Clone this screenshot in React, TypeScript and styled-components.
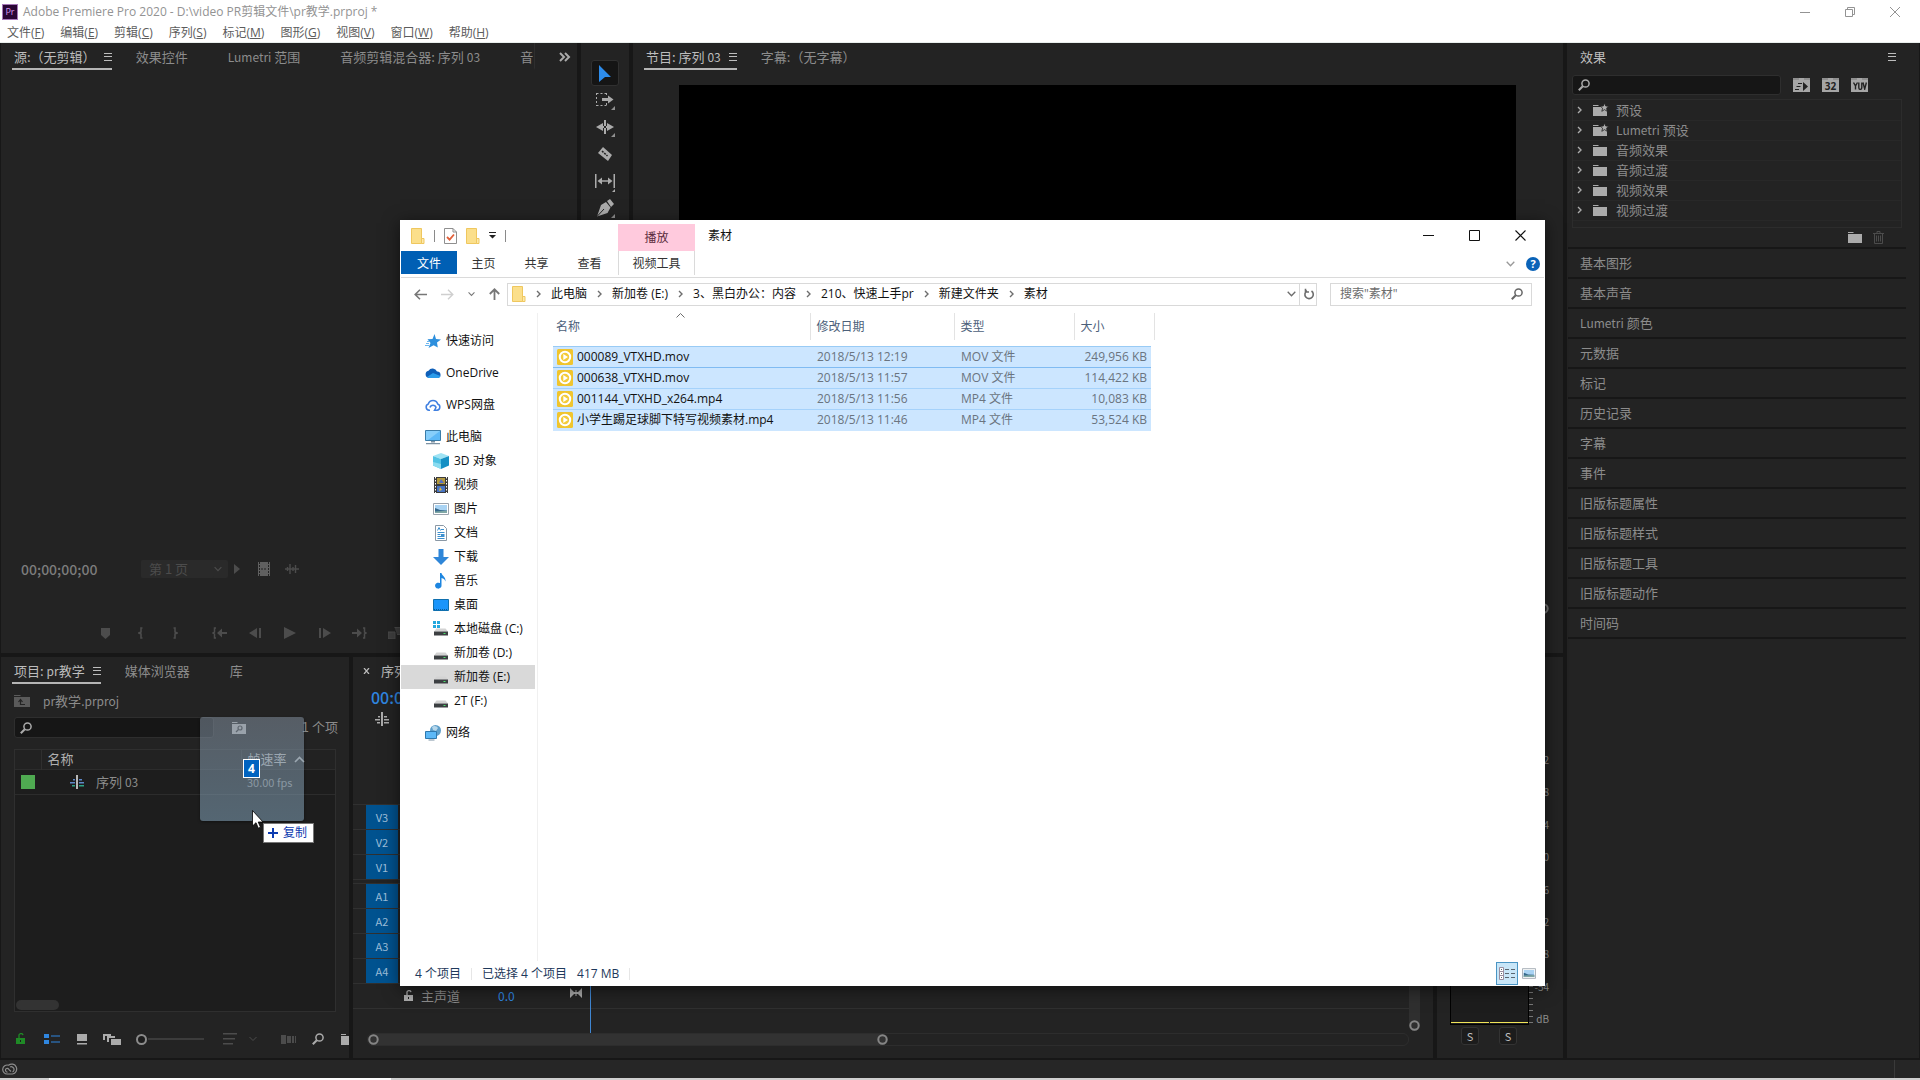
import React from 'react';
import styled, { createGlobalStyle, css } from 'styled-components';

const uiFont = '"Open Sans", "Noto Sans CJK SC", sans-serif';
const panelFont = '"Noto Sans CJK SC", "Open Sans", sans-serif';

const c = {
  gap: '#171717',
  panel: '#232323',
  well: '#1d1d1d',
  field: '#161616',
  line: '#303030',
  text: '#8c8c8c',
  bright: '#bdbdbd',
  icon: '#ababab',
  dim: '#4c4c4c',
  blue: '#2f86e0',
  track: '#00528f',
};

const GlobalStyle = createGlobalStyle`
  *, *::before, *::after { box-sizing: border-box; }
  html, body, #root { height: 100%; }
  body { margin: 0; overflow: hidden; background: ${c.gap}; font: 12px/16px ${uiFont}; }
  button, input, select { font: inherit; color: inherit; }
  svg { display: block; flex: none; }
  table { border-collapse: collapse; border-spacing: 0; }
`;

const Button = styled.button`
  display: flex;
  align-items: center;
  justify-content: center;
  flex: none;
  padding: 0;
  border: 0;
  background: none;
  white-space: nowrap;
`;

const Latin = styled.span`
  font-size: 12px;
`;

/* Panel captions set their Latin runs one size below the Chinese text. */
function Caption({ text }: { text: string }) {
  return (
    <span>
      {text.split(/([A-Za-z0-9.]+)/).map((part, i) => (i % 2 ? <Latin key={i}>{part}</Latin> : part))}
    </span>
  );
}

/* ---------- icons ---------- */

type IcoProps = { w: number; h: number; children: React.ReactNode; stroke?: number };

function Ico({ w, h, children, stroke }: IcoProps) {
  return (
    <svg
      width={w}
      height={h}
      viewBox={`0 0 ${w} ${h}`}
      fill={stroke ? 'none' : 'currentColor'}
      stroke={stroke ? 'currentColor' : 'none'}
      strokeWidth={stroke}
      aria-hidden="true"
    >
      {children}
    </svg>
  );
}

const MenuLines = () => (
  <Ico w={8} h={8}><path d="M0 0h8v1H0zM0 3h8v1H0zM0 7h8v1H0z" /></Ico>
);
const Magnifier = ({ size = 12 }: { size?: number }) => (
  <svg width={size} height={size} viewBox="0 0 12 12" fill="none" stroke="currentColor" strokeWidth="1.5" aria-hidden="true">
    <circle cx="7.5" cy="4.5" r="3.6" />
    <path d="M4.8 7.2L.8 11.2" strokeWidth="2" />
  </svg>
);
const FolderGlyph = ({ star }: { star?: boolean }) => (
  <Ico w={16} h={14}>
    <path d="M0 2h5l1 1H0zM0 4h14v9H0z" />
    {star && <path d="M11.5 0l1.2 3 3 .2-2.3 2 .8 3.1-2.7-1.7-2.7 1.7.8-3.1-2.3-2 3-.2z" stroke="#232323" strokeWidth=".8" />}
  </Ico>
);
const Ring = () => (
  <Ico w={11} h={11} stroke={2}><circle cx="5.5" cy="5.5" r="4.2" /></Ico>
);
const Lock = () => (
  <Ico w={12} h={12}>
    <path d="M1 5h9v6H1z" />
    <path d="M4 5V3a2 2 0 0 1 4-.8" fill="none" stroke="currentColor" strokeWidth="1.3" />
    <path d="M5 7h1v2H5z" fill="#1d1d1d" />
  </Ico>
);
const SequenceGlyph = ({ color }: { color?: boolean }) => (
  <Ico w={14} h={14}>
    <path d="M6 0h2v14H6z" fill={color ? '#b8b8b8' : undefined} />
    <path d="M3 4h2v1.5H3zM9 4h3v1.5H9zM9 7h5v1.5H9z" fill={color ? '#5d87c8' : undefined} />
    <path d="M0 7h5v1.5H0z" fill={color ? '#5d87c8' : undefined} />
    <path d="M2 10h3v1.5H2zM9 10h5v1.5H9z" fill={color ? '#2fa386' : undefined} />
  </Ico>
);
const FolderYellow = () => (
  <Ico w={14} h={16}>
    <path d="M.5.5h10v15H.5z" fill="#fbdf8b" stroke="#efc75e" />
    <path d="M10.5 10.5h2.5v5h-2.5z" fill="#fde9ab" stroke="#efc75e" />
  </Ico>
);
const CheckPage = () => (
  <Ico w={13} h={16}>
    <path d="M.5.5h8.5l3.5 3.5v11.5H.5z" fill="#fff" stroke="#8f8f8f" />
    <path d="M9 .5V4h3.5" fill="none" stroke="#8f8f8f" />
    <path d="M3 9l2.6 2.6L10 6.5" fill="none" stroke="#e2603a" strokeWidth="1.8" />
  </Ico>
);
const Crumb = () => (
  <Ico w={5} h={8} stroke={1.4}><path d="M1 1l3 3-3 3" /></Ico>
);
const ChevronDown = ({ w = 9 }: { w?: number }) => (
  <svg width={w} height={6} viewBox="0 0 9 6" fill="none" stroke="currentColor" strokeWidth="1.3" aria-hidden="true"><path d="M.7.8l3.8 4 3.8-4" /></svg>
);
const PlayFile = () => (
  <Ico w={16} h={16}>
    <rect width="16" height="16" rx="1.5" fill="#f0c52e" />
    <circle cx="8" cy="8" r="5.2" fill="#f3cb3a" stroke="#fff" strokeWidth="2" />
    <path d="M6.3 5L11 8l-4.7 3z" fill="#fff" />
  </Ico>
);
const PictureGlyph = ({ w = 16, h = 12 }: { w?: number; h?: number }) => (
  <svg width={w} height={h} viewBox="0 0 16 12" aria-hidden="true">
    <path d="M.5.5h15v11H.5z" fill="#fff" stroke="#9aa3ad" />
    <path d="M2 2h12v8H2z" fill="#a9d3f3" />
    <path d="M2 5l5 2 7 .5V10H2z" fill="#35688c" />
    <path d="M2 8.4l12-.6V10H2z" fill="#7fa7a5" />
  </svg>
);
const Drive = ({ system }: { system?: boolean }) => (
  <Ico w={16} h={16}>
    {system && <path d="M0 0h3v3H0zM4 0h3v3H4zM0 4h3v3H0zM4 4h3v3H4z" fill="#23a7dd" />}
    <path d="M3.5 7.5h9l2.5 3H1z" fill="#d3d3d3" />
    <path d="M1 10.5h14v4H1z" fill="#3c3f42" />
    <path d="M10.5 12h2v1h-2z" fill="#4be36b" />
  </Ico>
);

const navGlyphs: Record<string, React.ReactNode> = {
  star: <Ico w={16} h={16}><path d="M9.500 1l1.500 5 5 .4-4 3.100.8 5-4.200-2.300L3.500 15l2-5L2.500 6.300 7.500 6z" fill="#2d8fdd" /><path d="M0 12.500h4M1 10.500h3M2 8.500h2" stroke="#6db6ee" /></Ico>,
  cloud: <Ico w={16} h={16}><path d="M4 13a3.700 3.700 0 0 1-.5-7.300A4.800 4.800 0 0 1 12 6.500 3.300 3.300 0 0 1 13 13z" fill="#0f5fb8" /><path d="M2 12l6-4 7.500 3c-.5 1.300-1.500 2-2.500 2H4z" fill="#2b9bea" /></Ico>,
  wps: <Ico w={16} h={16} stroke={1.5}><path d="M5 13.200H4A3.200 3.200 0 0 1 3.300 7 4.900 4.900 0 0 1 12.700 7a3.200 3.200 0 0 1-.7 6.200H9.500L11 10.500a3.100 3.100 0 0 0-6 0" stroke="#3f7fe0" /></Ico>,
  pc: <Ico w={16} h={16}><path d="M.5 1.500h15v10H.5z" fill="#5cb8f7" stroke="#3a7ca8" /><path d="M1 2h14L3 11H1z" fill="#86cefb" /><path d="M6 12h4v1.500H6zM1 14h14v1.200H1z" fill="#7d92a3" /></Ico>,
  cube: <Ico w={16} h={16}><path d="M8 0l8 3-8 3-8-3z" fill="#9fe3f4" /><path d="M0 3l8 3v10l-8-3.500z" fill="#52c3e4" /><path d="M16 3L8 6v10l8-3.500z" fill="#1590c4" /><path d="M0 9l8 2v5l-8-3.500z" fill="#8bdcf0" /></Ico>,
  film: <Ico w={16} h={16}><path d="M1 0h14v16H1z" fill="#3b3b3b" /><path d="M4 1h8v6H4z" fill="#b49a3c" /><path d="M4 9h8v6H4z" fill="#4774c4" /><path d="M8 2l3 4H6z" fill="#5570c8" /><path d="M7 10l2 3-3 1z" fill="#e0b63c" /><path d="M2.500 0v16M13.500 0v16" stroke="#fff" strokeDasharray="1.500 1.500" /></Ico>,
  picture: <PictureGlyph />,
  doc: <Ico w={16} h={16}><path d="M2.500.5h8l3 3v12h-11z" fill="#fff" stroke="#8a98a5" /><path d="M4.500 5.500l1.500-3 1.500 3M8 4.500h3M4.500 7.500h7M4.500 9.500h3M4.500 11.500h7M4.500 13.500h7" fill="none" stroke="#3b8fcf" /><path d="M8 9h3.500v2H8z" fill="#3b8fcf" /></Ico>,
  down: <Ico w={16} h={16}><path d="M5.500 0h5v8H16l-8 8-8-8h5.500z" fill="#2f86d8" /></Ico>,
  note: <Ico w={16} h={16}><path d="M7 0h1.500c.4 3 4.500 3.500 4 8.500-.6-2-2-3.200-4-3.500v7.500a3.200 3 0 1 1-1.500-2.400z" fill="#1d86e0" /></Ico>,
  desktop: <Ico w={16} h={16}><path d="M.5 2.500h15v11H.5z" fill="#1a95fb" stroke="#0f6fae" /><path d="M1 12.500h14" stroke="#0b5d9a" strokeDasharray="1 1" /></Ico>,
  sysdrive: <Drive system />,
  drive: <Drive />,
  net: <Ico w={16} h={16}><circle cx="10.500" cy="5.500" r="5.500" fill="#5f9fca" /><path d="M7 2c2-2 5-1 6 1l-2 3-3-1z" fill="#b5d6ea" /><path d="M.5 6.500h11v7H.5z" fill="#5cb8f7" stroke="#2e78ae" /><path d="M3.500 15h6" stroke="#7d92a3" /></Ico>,
};

/* ---------- application frame ---------- */

const Page = styled.div`
  position: relative;
  display: flex;
  flex-direction: column;
  min-height: 100vh;
`;

const TitleBar = styled.header`
  display: flex;
  align-items: center;
  height: 22px;
  padding: 1px 20px 0 2px;
  gap: 5px;
  background: #fff;
  color: #939393;
`;

const AppBadge = styled.span`
  width: 16px;
  height: 16px;
  border: 1px solid #a678b8;
  background: #2a0634;
  color: #d79bf0;
  font-size: 9px;
  line-height: 14px;
  text-align: center;
`;

const AppTitle = styled.h1`
  flex: 1;
  margin: 0;
  font: inherit;
`;

const WindowButtons = styled.div<{ $gap: number }>`
  display: flex;
  gap: ${p => p.$gap}px;
`;

const MenuBar = styled.nav`
  display: flex;
  gap: 16px;
  height: 21px;
  padding: 2px 7px 0;
  border-bottom: 1px solid #e8eeec;
  background: #fff;
  color: #5c5c5c;
`;

const Workspace = styled.main`
  flex: 1;
  display: grid;
  grid-template-columns: minmax(0, 1fr) 352px;
  gap: 4px;
  padding: 0 1px 2px;
`;

const LeftSide = styled.div`
  display: grid;
  grid-template-rows: minmax(0, 610fr) minmax(0, 401fr);
  gap: 4px;
  min-width: 0;
`;

const UpperRow = styled.div`
  display: grid;
  grid-template-columns: 576fr 48px 930fr;
  gap: 4px;
  min-height: 0;
`;

const LowerRow = styled.div`
  display: grid;
  grid-template-columns: 348px minmax(0, 1fr) 126px;
  gap: 4px;
  min-height: 0;
`;

const Panel = styled.section`
  position: relative;
  display: flex;
  flex-direction: column;
  min-width: 0;
  min-height: 0;
  overflow: hidden;
  background: ${c.panel};
  color: ${c.text};
  font: 13px/18px ${panelFont};
`;

const TabBar = styled.div`
  display: flex;
  flex: none;
  gap: 24px;
  height: 27px;
  padding: 0 10px 0 11px;
`;

const Tab = styled(Button)<{ $active?: boolean }>`
  gap: 8px;
  padding: 2px ${p => (p.$active ? 0 : 16)}px 0 ${p => (p.$active ? 2 : 0)}px;
  border-bottom: 2px solid ${p => (p.$active ? '#b5b5b5' : 'transparent')};
  color: ${p => (p.$active ? c.bright : c.text)};
`;

const TabOverflow = styled(Button)`
  margin-left: auto;
  padding-right: 4px;
  color: ${c.icon};
`;

const ClippedTab = styled(Tab)`
  padding-right: 1px;
  border-right: 1px solid #2e2e2e;
`;

const Fill = styled.div`
  flex: 1;
`;

/* ---------- source monitor ---------- */

const SourceInfo = styled.div`
  display: flex;
  align-items: center;
  height: 18px;
  padding-left: 20px;
  color: ${c.dim};
`;

const Timecode = styled.span<{ $hot?: boolean }>`
  font: 500 ${p => (p.$hot ? 16 : 14)}px/18px "Noto Sans CJK SC", sans-serif;
  color: ${p => (p.$hot ? c.blue : '#7c7c7c')};
`;

const PageSelect = styled.select`
  appearance: none;
  width: 73px;
  height: 18px;
  padding: 0 8px;
  border: 0;
  border-radius: 2px;
  background: #2a2a2a;
  color: ${c.dim};
`;

const PageField = styled.label`
  display: flex;
  align-items: center;
  margin: 0 6px 0 auto;
  width: 87px;
  border-radius: 2px;
  background: #2a2a2a;
`;

const InfoLeft = styled.div`
  display: flex;
  width: 213px;
`;

const InfoIcons = styled.div`
  display: flex;
  align-items: center;
  gap: 15px;
`;

const Transport = styled.div`
  display: flex;
  height: 20px;
  margin: 45px 0 10px;
  padding-left: 87px;
  color: ${c.dim};
`;

const TransportGroup = styled.div`
  display: flex;
  & + & { margin-left: 9px; }
`;

const TransportButton = styled(Button)`
  width: 35px;
`;

/* ---------- tools ---------- */

const ToolList = styled.div`
  display: flex;
  flex-direction: column;
  align-items: center;
  padding-top: 17px;
  color: ${c.icon};
`;

const Tool = styled(Button)<{ $active?: boolean }>`
  width: 28px;
  height: 27px;
  ${p => p.$active && css`
    height: 26px;
    border: 1px solid #303030;
    border-radius: 3px;
    background: #151515;
    color: #2d8ceb;
  `}
`;

/* ---------- program monitor ---------- */

const Screen = styled.div`
  margin: 15px 47px 0 46px;
  aspect-ratio: 16 / 9;
  background: #000;
`;

const ZoomRow = styled.div`
  display: flex;
  justify-content: flex-end;
  margin-top: 47px;
  padding-right: 14px;
  color: #777;
`;

/* ---------- effects ---------- */

const EffectsHead = styled.div`
  display: flex;
  align-items: center;
  justify-content: space-between;
  height: 32px;
  padding: 0 23px 4px 13px;
  color: ${c.bright};
`;

const SearchBox = styled.label<{ $w: number; $h: number }>`
  display: flex;
  align-items: center;
  width: ${p => p.$w}px;
  height: ${p => p.$h}px;
  padding-left: 5px;
  border: 1px solid #2e2e2e;
  border-radius: 3px;
  background: ${c.field};
  color: ${c.icon};
`;

const SearchInput = styled.input`
  flex: 1;
  min-width: 0;
  border: 0;
  outline: 0;
  background: none;
`;

const EffectsSearch = styled.div`
  display: flex;
  align-items: center;
  gap: 12px;
  padding-left: 5px;
  color: ${c.icon};
`;

const FxBadge = styled(Button)`
  width: 17px;
  height: 14px;
  border-top: 2px dashed #8f8f8f;
  background: #a6a6a6;
  color: #232323;
  font: 700 10px/12px "Open Sans", sans-serif;
`;

const EffectsTree = styled.ul`
  margin: 4px 17px 0 5px;
  padding: 1px 0 6px;
  border: 1px solid #2c2c2c;
  list-style: none;
`;

const EffectsItem = styled.li`
  display: flex;
  align-items: center;
  gap: 7px;
  height: 20px;
  padding: 0 0 2px 4px;
  border-bottom: 1px solid #282828;
  svg { color: ${c.icon}; }
  svg:first-child { margin-right: 4px; }
`;

const EffectsFoot = styled.div`
  display: flex;
  align-items: center;
  justify-content: flex-end;
  gap: 9px;
  height: 19px;
  padding: 0 35px 1px 0;
  color: ${c.icon};
`;

const Sections = styled.div`
  margin: 0 13px 0 1px;
`;

const SectionRow = styled(Button)`
  justify-content: flex-start;
  width: 100%;
  height: 30px;
  padding: 0 0 1px 12px;
  border-top: 2px solid ${c.gap};
  &:last-child { height: 32px; border-bottom: 2px solid ${c.gap}; }
`;

/* ---------- project ---------- */

const ProjectPath = styled.div`
  display: flex;
  align-items: center;
  gap: 13px;
  height: 33px;
  padding: 1px 0 0 13px;
`;

const ProjectSearch = styled.div`
  display: flex;
  align-items: center;
  height: 21px;
  padding-left: 13px;
  color: ${c.text};
`;

const ItemCount = styled.span`
  margin-left: auto;
  padding: 0 11px 2px 0;
`;

const BinSearch = styled(Button)`
  margin-left: 18px;
  color: ${c.icon};
`;

const ProjectList = styled.div`
  flex: 1;
  display: flex;
  flex-direction: column;
  justify-content: space-between;
  margin: 11px 13px 0 13px;
  border: 1px solid #2f2f2f;
  background: ${c.well};
`;

const ProjectTable = styled.table`
  width: 100%;
  table-layout: fixed;
  th { height: 19px; padding: 0 0 1px 6px; background: #222; font-weight: 400; color: #b0b0b0; text-align: left; line-height: 18px; }
  th + th { border-left: 1px solid #2f2f2f; }
  td { height: 25px; padding: 0 0 1px 6px; border: solid #2c2c2c; border-width: 1px 0; }
`;

const ThCell = styled.div`
  display: flex;
  align-items: center;
  gap: 7px;
`;

const Label = styled.i`
  display: block;
  width: 14px;
  height: 14px;
  background: #4faa51;
`;

const ItemName = styled.div`
  display: flex;
  align-items: center;
  gap: 12px;
  padding-left: 23px;
`;

const Rate = styled.span`
  font-size: 11px;
`;

const Thumb = styled.div`
  width: 43px;
  height: 10px;
  margin: 1px;
  border-radius: 5px;
  background: #333;
`;

const ProjectTools = styled.div`
  display: flex;
  align-items: center;
  gap: 15px;
  height: 46px;
  padding: 8px 0 0 14px;
  color: ${c.icon};
`;

const ToolButton = styled(Button)<{ $color?: string }>`
  color: ${p => p.$color ?? c.icon};
`;

const SizeRange = styled.input`
  appearance: none;
  flex: none;
  width: 72px;
  height: 12px;
  margin: 0;
  background: linear-gradient(#3c3c3c, #3c3c3c) 12px 5px / 56px 2px no-repeat;
  &::-webkit-slider-thumb {
    appearance: none;
    width: 11px;
    height: 11px;
    border: 2px solid #8c8c8c;
    border-radius: 50%;
    background: #1d1d1d;
  }
`;

/* ---------- timeline ---------- */

const SequenceTab = styled(TabBar)`
  align-items: center;
  gap: 11px;
  padding-left: 10px;
  color: ${c.bright};
`;

const TimelineHead = styled.div`
  display: flex;
  flex-direction: column;
  align-items: flex-start;
  gap: 6px;
  height: 120px;
  padding: 4px 0 0 18px;
  color: ${c.icon};
  svg { margin-left: 4px; }
`;

const TimelineBody = styled.div`
  display: flex;
  padding-right: 13px;
`;

const Tracks = styled.div`
  flex: 1;
`;

const TrackGroup = styled.div`
  border-bottom: 1px solid ${c.line};
  & + & { margin-top: 3px; }
`;

const Track = styled.div`
  display: flex;
  height: 25px;
  padding-left: 13px;
  border-top: 1px solid ${c.line};
`;

const TrackTarget = styled(Button)`
  width: 32px;
  background: ${c.track};
  color: #9dbdd8;
  font-size: 11px;
`;

const MasterTrack = styled.div`
  display: flex;
  align-items: center;
  height: 25px;
  padding: 0 0 1px 50px;
  border-bottom: 1px solid ${c.line};
  color: ${c.icon};
`;

const MasterName = styled.span`
  width: 83px;
  padding-left: 6px;
  color: ${c.text};
`;

const MasterLevel = styled.span`
  width: 72px;
  color: ${c.blue};
  font-size: 12px;
`;

const VScroll = styled.div`
  display: flex;
  align-items: flex-end;
  width: 11px;
  margin-bottom: -22px;
  border-radius: 5px;
  background: #2f2f2f;
  color: #858585;
`;

const HScroll = styled.div`
  display: flex;
  margin: 24px 24px 0 14px;
  border: 1px solid #2d2d2d;
  border-radius: 6px;
  color: #858585;
`;

const HScrollRange = styled.div`
  display: flex;
  justify-content: space-between;
  width: 50%;
  border-radius: 6px;
  background: #323232;
`;

const Playhead = styled.i`
  position: absolute;
  left: 237px;
  top: 120px;
  bottom: 25px;
  width: 1px;
  background: #3f86d2;
`;

/* ---------- audio meter ---------- */

const MeterArea = styled.div`
  flex: 1;
  display: flex;
  margin-top: 90px;
  padding: 0 14px 0 13px;
`;

const MeterBox = styled.div`
  display: grid;
  grid-template-columns: 1fr 1fr;
  gap: 1px;
  align-items: end;
  width: 79px;
  padding-bottom: 1px;
  border: 1px solid #000;
  background: ${c.well};
`;

const MeterFloor = styled.i`
  height: 1px;
  background: #f0e458;
`;

const MeterTicks = styled.div`
  width: 4px;
  background: repeating-linear-gradient(to top, transparent 0 2px, #777 2px 3px, transparent 3px 6px);
`;

const MeterScale = styled.div`
  flex: 1;
  display: flex;
  flex-direction: column;
  justify-content: space-between;
  text-align: right;
  padding-top: 7px;
  font: 10px/12px "Noto Sans CJK SC", sans-serif;
`;

const SoloRow = styled.div`
  display: flex;
  gap: 20px;
  padding: 2px 0 13px 24px;
`;

const Solo = styled(Button)`
  width: 18px;
  height: 18px;
  padding-bottom: 1px;
  border: 1px solid #333;
  border-radius: 3px;
  background: #1c1c1c;
  color: ${c.bright};
  font-size: 11px;
`;

/* ---------- bottom strips ---------- */

const AppStatus = styled.footer`
  display: flex;
  align-items: center;
  height: 18px;
  padding-left: 2px;
  background: #262626;
  color: #8d8d8d;
`;

const StatusDivider = styled.i`
  width: 1px;
  height: 18px;
  margin: 0 25px 0 auto;
  background: #3a3a3a;
`;

const Taskbar = styled.div`
  display: flex;
  height: 2px;
  padding-left: 49px;
  background: #cfcfcf;
`;

const TaskbarField = styled.i`
  width: 342px;
  background: #fdfdfd;
`;

/* ---------- drag feedback ---------- */

const DragGhost = styled.div`
  position: absolute;
  left: 200px;
  top: 717px;
  width: 104px;
  height: 104px;
  border-radius: 3px;
  background: linear-gradient(rgba(137, 151, 167, .5), rgba(135, 169, 193, .52));
  box-shadow: 0 1px 3px rgba(0, 0, 0, .4);
`;

const DragCount = styled.span`
  position: absolute;
  left: 43px;
  top: 42px;
  width: 17px;
  height: 19px;
  border: 1px solid #fff;
  background: #0063c0;
  color: #fff;
  font-weight: 700;
  line-height: 17px;
  text-align: center;
`;

const Pointer = styled.div`
  position: absolute;
  left: 52px;
  top: 93px;
`;

const DropHint = styled.div`
  position: absolute;
  left: 63px;
  top: 106px;
  display: flex;
  align-items: center;
  gap: 5px;
  height: 20px;
  padding: 0 6px 0 4px;
  border: 1px solid #767676;
  background: #fff;
  color: #0d3bb0;
  white-space: nowrap;
`;

/* ---------- file explorer ---------- */

const Explorer = styled.section`
  position: absolute;
  left: 400px;
  top: 220px;
  right: 375px;
  bottom: 94px;
  display: flex;
  flex-direction: column;
  padding: 0 1px;
  background: #fff;
  color: #111;
  box-shadow: 0 3px 16px rgba(0, 0, 0, .55);
`;

const RibbonTop = styled.div`
  display: flex;
  height: 31px;
`;

const QuickAccess = styled.div`
  display: flex;
  align-items: center;
  gap: 9px;
  width: 217px;
  padding-left: 10px;
`;

const Bar = styled.i`
  width: 1px;
  height: 12px;
  background: #8a8a8a;
`;

const ContextTab = styled.div`
  width: 77px;
  margin-top: 4px;
  background: #ffcadd;
  color: #5a2a3c;
  line-height: 27px;
  text-align: center;
`;

const ExplorerTitle = styled.h2`
  flex: 1;
  margin: 0;
  padding-left: 13px;
  font: inherit;
  line-height: 32px;
`;

const ExplorerButtons = styled(WindowButtons)`
  padding-right: 18px;
`;

const RibbonTabs = styled.div`
  display: flex;
  height: 27px;
  border-bottom: 1px solid #dadada;
  color: #333;
`;

const RibbonTab = styled(Button)<{ $kind?: 'file' | 'context' }>`
  width: 53px;
  height: 24px;
  padding-top: 2px;
  ${p => p.$kind === 'file' && css`
    width: 56px;
    height: 23px;
    background: #005fb4;
    color: #fff;
  `}
  ${p => p.$kind === 'context' && css`
    width: 77px;
    margin-left: 2px;
    border: solid #dadada;
    border-width: 0 1px;
  `}
`;

const RibbonEnd = styled.div`
  display: flex;
  align-items: center;
  gap: 11px;
  margin-left: auto;
  padding-right: 4px;
  color: #999;
`;

const Help = styled(Button)`
  width: 14px;
  height: 14px;
  border-radius: 50%;
  background: #0a63b8;
  color: #fff;
  font-weight: 700;
  font-size: 11px;
`;

const AddressRow = styled.div`
  display: flex;
  align-items: center;
  gap: 13px;
  height: 32px;
  padding: 0 12px 0 13px;
  color: #777;
`;

const NavArrows = styled.div`
  display: flex;
  align-items: center;
  gap: 14px;
  width: 80px;
`;

const AddressBox = styled.div`
  flex: 1;
  display: flex;
  align-items: center;
  gap: 10px;
  height: 23px;
  padding: 0 1px 0 4px;
  border: 1px solid #d9d9d9;
  color: #6d6d6d;
`;

const CrumbLink = styled.a`
  color: #111;
  text-decoration: none;
  white-space: nowrap;
`;

const AddressTools = styled.div`
  display: flex;
  align-items: center;
  align-self: stretch;
  gap: 3px;
  margin-left: auto;
`;

const AddressSplit = styled.i`
  align-self: stretch;
  width: 1px;
  background: #d9d9d9;
`;

const FileSearch = styled.label`
  display: flex;
  align-items: center;
  width: 202px;
  height: 23px;
  padding: 0 8px 0 9px;
  border: 1px solid #d9d9d9;
  color: #666;
`;

const FileSearchInput = styled(SearchInput)`
  padding: 0;
  &::placeholder { color: #6d6d6d; }
`;

const ExplorerBody = styled.div`
  flex: 1;
  display: flex;
  min-height: 0;
  padding-top: 3px;
`;

const NavPane = styled.nav`
  width: 137px;
  padding: 16px 2px 0 0;
  border-right: 1px solid #f0f0f0;
`;

const NavItem = styled.a<{ $child?: boolean; $selected?: boolean; $spaced?: boolean }>`
  display: flex;
  align-items: center;
  gap: 5px;
  height: 24px;
  margin-bottom: ${p => (p.$spaced ? 8 : 0)}px;
  padding-left: ${p => (p.$child ? 32 : 24)}px;
  background: ${p => (p.$selected ? '#d9d9d9' : 'none')};
  color: #111;
  text-decoration: none;
  white-space: nowrap;
`;

const FileArea = styled.div`
  flex: 1;
  padding-left: 15px;
`;

const FileTable = styled.table`
  table-layout: fixed;
  width: 602px;
  th {
    height: 27px;
    padding: 0 0 0 6px;
    border-right: 1px solid #e3e3e3;
    color: #4c607a;
    font-weight: 400;
    text-align: left;
  }
  th:first-child { padding-left: 3px; }
`;

const FileRows = styled(FileTable)`
  width: 598px;
  margin-top: 6px;
  td {
    height: 21px;
    padding: 0 4px 0 6px;
    border-bottom: 1px solid #a5d2fb;
    background: #cce6ff;
    color: #6a7480;
    line-height: 16px;
    white-space: nowrap;
  }
  td:first-child { padding-left: 4px; color: #111; }
  td:last-child { text-align: right; }
  tr:first-child td { border-top: 1px solid #99cbf5; border-bottom-color: #80bbf2; }
  tr:last-child td { border-bottom: 0; }
`;

const FileName = styled.div`
  display: flex;
  align-items: center;
  gap: 4px;
`;

const HeadName = styled.div`
  position: relative;
`;

const SortMark = styled.span`
  position: absolute;
  left: 120px;
  top: -6px;
  color: #6d6d6d;
`;

const ExplorerStatus = styled.footer`
  display: flex;
  align-items: center;
  height: 25px;
  padding: 0 8px 0 14px;
  gap: 10px;
  color: #1e395b;
`;

const StatusSplit = styled.i`
  width: 1px;
  height: 12px;
  background: #e6e6e6;
`;

const ViewButtons = styled.div`
  display: flex;
  align-items: center;
  gap: 4px;
  margin-left: auto;
`;

const ViewButton = styled(Button)<{ $on?: boolean }>`
  height: 23px;
  ${p => p.$on && css`
    width: 22px;
    border: 1px solid #4a95c4;
    background: #c8e6f8;
  `}
`;

/* ---------- data ---------- */

const menus: [string, string][] = [
  ['文件', 'F'], ['编辑', 'E'], ['剪辑', 'C'], ['序列', 'S'], ['标记', 'M'],
  ['图形', 'G'], ['视图', 'V'], ['窗口', 'W'], ['帮助', 'H'],
];

const effects = ['预设', 'Lumetri 预设', '音频效果', '音频过渡', '视频效果', '视频过渡'];

const sections = [
  '基本图形', '基本声音', 'Lumetri 颜色', '元数据', '标记', '历史记录', '字幕', '事件',
  '旧版标题属性', '旧版标题样式', '旧版标题工具', '旧版标题动作', '时间码',
];

const crumbs = ['此电脑', '新加卷 (E:)', '3、黑白办公：内容', '210、快速上手pr', '新建文件夹', '素材'];

const nav: { icon: string; text: string; child?: boolean; spaced?: boolean; selected?: boolean }[] = [
  { icon: 'star', text: '快速访问', spaced: true },
  { icon: 'cloud', text: 'OneDrive', spaced: true },
  { icon: 'wps', text: 'WPS网盘', spaced: true },
  { icon: 'pc', text: '此电脑' },
  { icon: 'cube', text: '3D 对象', child: true },
  { icon: 'film', text: '视频', child: true },
  { icon: 'picture', text: '图片', child: true },
  { icon: 'doc', text: '文档', child: true },
  { icon: 'down', text: '下载', child: true },
  { icon: 'note', text: '音乐', child: true },
  { icon: 'desktop', text: '桌面', child: true },
  { icon: 'sysdrive', text: '本地磁盘 (C:)', child: true },
  { icon: 'drive', text: '新加卷 (D:)', child: true },
  { icon: 'drive', text: '新加卷 (E:)', child: true, selected: true },
  { icon: 'drive', text: '2T (F:)', child: true, spaced: true },
  { icon: 'net', text: '网络' },
];

const files = [
  ['000089_VTXHD.mov', '2018/5/13 12:19', 'MOV 文件', '249,956 KB'],
  ['000638_VTXHD.mov', '2018/5/13 11:57', 'MOV 文件', '114,422 KB'],
  ['001144_VTXHD_x264.mp4', '2018/5/13 11:56', 'MP4 文件', '10,083 KB'],
  ['小学生踢足球脚下特写视频素材.mp4', '2018/5/13 11:46', 'MP4 文件', '53,524 KB'],
];

const corner = <path d="M21 17v4h-4z" opacity=".8" />;

const tools: [string, React.ReactNode][] = [
  ['向前选择轨道', <Ico w={22} h={22}><path d="M2.500 4.500h10M2.500 16.500h10M2.500 4v13M12.500 4v3M12.500 14v3" fill="none" stroke="currentColor" strokeDasharray="2 2" /><path d="M8 9h6V6.500l5.500 4-5.500 4V12H8z" />{corner}</Ico>],
  ['波纹编辑', <Ico w={22} h={22}><path d="M10 4h2v14h-2zM9 10V7l-7 4 7 4v-3h4v3l7-4-7-4v3z" />{corner}</Ico>],
  ['剃刀', <Ico w={22} h={22}><path d="M9 4l9 8-4 6-10-8z" /><path d="M8 8l5.500 5" stroke="#232323" strokeWidth="1.500" strokeDasharray="2 1" /></Ico>],
  ['外滑', <Ico w={22} h={22}><path d="M1 4h1.500v14H1zM19.500 4H21v14h-1.500zM8 7.500v2.700h6V7.500l4.500 3.500-4.500 3.500v-2.700H8v2.700L3.500 11z" /><path d="M21 19v3h-3z" /></Ico>],
  ['钢笔', <Ico w={22} h={22}><path d="M13 4l3-2 4 5-3 3zM12 5l4.500 5.500-3 5.500L3 19.500 7 8z" /><path d="M3 19.500l7-7.500" stroke="#232323" />{corner}</Ico>],
];

function SourceMonitor() {
  return (
    <Panel>
      <TabBar>
        <Tab $active>源:（无剪辑）<MenuLines /></Tab>
        <Tab>效果控件</Tab>
        <Tab><Caption text="Lumetri 范围" /></Tab>
        <Tab><Caption text="音频剪辑混合器: 序列 03" /></Tab>
        <ClippedTab>音</ClippedTab>
        <TabOverflow aria-label="更多面板">
          <Ico w={12} h={10} stroke={2}><path d="M1 1l4 4-4 4M6 1l4 4-4 4" /></Ico>
        </TabOverflow>
      </TabBar>
      <Fill />
      <SourceInfo>
        <InfoLeft>
          <Timecode>00;00;00;00</Timecode>
          <PageField>
            <PageSelect aria-label="页"><option>第 1 页</option></PageSelect>
            <ChevronDown w={8} />
          </PageField>
        </InfoLeft>
        <InfoIcons>
          <Ico w={9} h={10}><path d="M0 0l6 5-6 5z" /></Ico>
          <Ico w={12} h={14}><path d="M0 0h12v14H0z" fill="#606060" /><path d="M1.500 0v14M10.500 0v14M3 7h6" stroke="#232323" strokeDasharray="2 1" /></Ico>
          <Ico w={14} h={10} stroke={1.4}><path d="M0 5h14M2.500 3v4M5 0v10M8 3v4M10.500 1v8" /></Ico>
        </InfoIcons>
      </SourceInfo>
      <Transport>
        <TransportGroup>
          <TransportButton aria-label="添加标记"><Ico w={9} h={11}><path d="M0 0h9v7l-4.500 4L0 7z" /></Ico></TransportButton>
          <TransportButton aria-label="标记入点"><Ico w={5} h={12} stroke={1.6}><path d="M4.500 1H3v4L1 6l2 1v4h1.500" /></Ico></TransportButton>
          <TransportButton aria-label="标记出点"><Ico w={5} h={12} stroke={1.6}><path d="M.5 1H2v4l2 1-2 1v4H.5" /></Ico></TransportButton>
        </TransportGroup>
        <TransportGroup>
          <TransportButton aria-label="转到入点"><Ico w={15} h={12}><path d="M4 1H2.500v4L1 6l1.500 1v4H4" fill="none" stroke="currentColor" strokeWidth="1.500" /><path d="M5 6l5-4.500V5h5v2h-5v3.500z" /></Ico></TransportButton>
          <TransportButton aria-label="后退一帧"><Ico w={12} h={10}><path d="M8 0v10L0 5zM10 0h2v10h-2z" /></Ico></TransportButton>
          <TransportButton aria-label="播放"><Ico w={12} h={12}><path d="M0 0l12 6-12 6z" /></Ico></TransportButton>
          <TransportButton aria-label="前进一帧"><Ico w={12} h={10}><path d="M4 0v10l8-5zM0 0h2v10H0z" /></Ico></TransportButton>
          <TransportButton aria-label="转到出点"><Ico w={15} h={12}><path d="M11 1h1.500v4L14 6l-1.500 1v4H11" fill="none" stroke="currentColor" strokeWidth="1.500" /><path d="M10 6L5 1.500V5H0v2h5v3.500z" /></Ico></TransportButton>
          <TransportButton aria-label="插入"><Ico w={14} h={12}><path d="M0 5h7v7H0zM6.500.5h7v7H9" stroke="currentColor" fillOpacity=".7" /></Ico></TransportButton>
        </TransportGroup>
      </Transport>
    </Panel>
  );
}

function ToolPanel() {
  return (
    <Panel>
      <ToolList>
        <Tool $active aria-label="选择"><Ico w={12} h={17}><path d="M0 0l12 12H6l-6 5z" /></Ico></Tool>
        {tools.map(([name, icon]) => <Tool key={name} aria-label={name}>{icon}</Tool>)}
      </ToolList>
    </Panel>
  );
}

function EffectsPanel() {
  return (
    <Panel>
      <EffectsHead>效果<MenuLines /></EffectsHead>
      <EffectsSearch>
        <SearchBox $w={209} $h={20}><Magnifier /><SearchInput aria-label="搜索效果" /></SearchBox>
        <FxBadge aria-label="加速效果"><Ico w={13} h={9}><path d="M8 0l5 4.500-5 4.500zM3 1h4v1H3zM1.500 4h4v1h-4zM0 7h4v1H0z" /></Ico></FxBadge>
        <FxBadge>32</FxBadge>
        <FxBadge aria-label="YUV"><Ico w={14} h={8} stroke={1.4}><path d="M.5.5l2 3.500v3.500M4.500.5l-2 3.500M5.800.5v5c0 2.500 3 2.500 3 0v-5M10 .5l1.700 6.500L13.400.5" /></Ico></FxBadge>
      </EffectsSearch>
      <EffectsTree>
        {effects.map((name, i) => (
          <EffectsItem key={name}><Crumb /><FolderGlyph star={i < 2} /><Caption text={name} /></EffectsItem>
        ))}
      </EffectsTree>
      <EffectsFoot>
        <Button aria-label="新建自定义素材箱"><FolderGlyph /></Button>
        <ToolButton $color={c.dim} aria-label="删除"><Ico w={11} h={13} stroke={1}><path d="M0 2.500h11M4 2V.5h3V2M1.500 3v9.500h8V3M3.500 4.500v6M5.500 4.500v6M7.500 4.500v6" /></Ico></ToolButton>
      </EffectsFoot>
      <Sections>
        {sections.map(name => <SectionRow key={name}><Caption text={name} /></SectionRow>)}
      </Sections>
    </Panel>
  );
}

function ProjectPanel() {
  return (
    <Panel>
      <TabBar>
        <Tab $active><Caption text="项目: pr教学" /><MenuLines /></Tab>
        <Tab>媒体浏览器</Tab>
        <Tab>库</Tab>
      </TabBar>
      <ProjectPath>
        <ToolButton $color="#5a5a5a" aria-label="上一级"><Ico w={16} h={12}><path d="M0 0h6l1 1H0zM0 2h16v10H0z" /><path d="M4.500 7l2-2.500 2 2.500M6.500 5v4.500H11" fill="none" stroke="#232323" strokeWidth="1.200" /></Ico></ToolButton>
        <Caption text="pr教学.prproj" />
      </ProjectPath>
      <ProjectSearch>
        <SearchBox $w={200} $h={21}><Magnifier /><SearchInput aria-label="搜索项目" /></SearchBox>
        <BinSearch aria-label="素材箱查询"><Ico w={14} h={12}><path d="M0 0h5l1 1H0zM0 2h14v10H0z" /><circle cx="8" cy="6" r="2" fill="none" stroke="#333" strokeWidth="1.200" /><path d="M6.500 7.500L4 10" stroke="#333" strokeWidth="1.200" /></Ico></BinSearch>
        <ItemCount>1 个项</ItemCount>
      </ProjectSearch>
      <ProjectList>
        <ProjectTable>
          <colgroup><col style={{ width: 26 }} /><col style={{ width: 200 }} /><col /></colgroup>
          <thead>
            <tr><th aria-label="标签" /><th>名称</th><th><ThCell>帧速率<Ico w={11} h={7} stroke={1.6}><path d="M1 6l4.500-4.500L10 6" /></Ico></ThCell></th></tr>
          </thead>
          <tbody>
            <tr>
              <td><Label /></td>
              <td><ItemName><SequenceGlyph color /><Caption text="序列 03" /></ItemName></td>
              <td><Rate>30.00 fps</Rate></td>
            </tr>
          </tbody>
        </ProjectTable>
        <Thumb />
      </ProjectList>
      <ProjectTools>
        <ToolButton $color="#1f8a26" aria-label="可写"><Lock /></ToolButton>
        <ToolButton $color={c.blue} aria-label="列表视图"><Ico w={19} h={12}><path d="M2 1h5v4H2zM2 7h5v4H2zM9 2.500h9v1H9zM9 8.500h9v1H9z" /></Ico></ToolButton>
        <ToolButton aria-label="图标视图"><Ico w={11} h={11}><path d="M1 0h10v7H1zM1 9h10v1.500H1z" /></Ico></ToolButton>
        <ToolButton aria-label="自由变换视图"><Ico w={19} h={11}><path d="M1 0h8v2H3v4H1zM5 2h8v2H7v4H5zM9 5h10v6H9z" /></Ico></ToolButton>
        <SizeRange type="range" aria-label="缩略图大小" min={0} max={100} defaultValue={0} />
        <ToolButton $color={c.dim} aria-label="排序图标"><Ico w={34} h={12}><path d="M0 0h14v1.500H0zM0 5h12v1.500H0zM0 10h10v1.500H0z" /><path d="M26.500 4l3.500 3.500L33.500 4" fill="none" stroke="currentColor" /></Ico></ToolButton>
        <ToolButton $color={c.dim} aria-label="自动匹配序列"><Ico w={25} h={9}><path d="M9 0h5v9H9zM15 1h4v7h-4zM20 1h2v7h-2zM23 1h1v7h-1z" /></Ico></ToolButton>
        <ToolButton aria-label="查找"><Magnifier /></ToolButton>
        <ToolButton aria-label="新建素材箱"><Ico w={17} h={11}><path d="M2 0h5v1H2zM2 2h15v9H2z" /></Ico></ToolButton>
      </ProjectTools>
    </Panel>
  );
}

function Timeline() {
  return (
    <Panel>
      <SequenceTab as="div">
        <Ico w={7} h={6} stroke={1.2}><path d="M1 0l5 6M6 0L1 6" /></Ico>
        <Caption text="序列 03" />
      </SequenceTab>
      <TimelineHead>
        <Timecode $hot>00:00:00:00</Timecode>
        <SequenceGlyph />
      </TimelineHead>
      <TimelineBody>
        <Tracks>
          <TrackGroup>{['V3', 'V2', 'V1'].map(t => <Track key={t}><TrackTarget>{t}</TrackTarget></Track>)}</TrackGroup>
          <TrackGroup>{['A1', 'A2', 'A3', 'A4'].map(t => <Track key={t}><TrackTarget>{t}</TrackTarget></Track>)}</TrackGroup>
          <MasterTrack>
            <Lock />
            <MasterName>主声道</MasterName>
            <MasterLevel>0.0</MasterLevel>
            <Ico w={12} h={16}><path d="M0 0l5 5-5 5zM12 0v10L7 5zM5.500 2h1v6h-1zM3 4h6v2H3z" /></Ico>
          </MasterTrack>
        </Tracks>
        <VScroll><Ring /></VScroll>
      </TimelineBody>
      <HScroll><HScrollRange><Ring /><Ring /></HScrollRange></HScroll>
      <Playhead />
    </Panel>
  );
}

function AudioMeter() {
  return (
    <Panel>
      <MeterArea>
        <MeterBox><MeterFloor /><MeterFloor /></MeterBox>
        <MeterTicks />
        <MeterScale>
          {['-12', '-18', '-24', '-30', '-36', '-42', '-48', '-54', 'dB'].map(v => <span key={v}>{v}</span>)}
        </MeterScale>
      </MeterArea>
      <SoloRow><Solo>S</Solo><Solo>S</Solo></SoloRow>
    </Panel>
  );
}

function FileExplorer() {
  return (
    <Explorer>
      <RibbonTop>
        <QuickAccess>
          <FolderYellow /><Bar /><CheckPage /><FolderYellow />
          <Ico w={7} h={7}><path d="M0 0h7v1H0zM0 3h7L3.500 6.500z" fill="#222" /></Ico>
          <Bar />
        </QuickAccess>
        <ContextTab>播放</ContextTab>
        <ExplorerTitle>素材</ExplorerTitle>
        <ExplorerButtons $gap={35}>
          <Button aria-label="最小化"><Ico w={11} h={11}><path d="M0 5h11v1H0z" /></Ico></Button>
          <Button aria-label="最大化"><Ico w={11} h={11} stroke={1}><path d="M.5.5h10v10H.5z" /></Ico></Button>
          <Button aria-label="关闭"><Ico w={11} h={11} stroke={1.1}><path d="M.5.5l10 10M10.500.5l-10 10" /></Ico></Button>
        </ExplorerButtons>
      </RibbonTop>
      <RibbonTabs>
        <RibbonTab $kind="file">文件</RibbonTab>
        <RibbonTab>主页</RibbonTab>
        <RibbonTab>共享</RibbonTab>
        <RibbonTab>查看</RibbonTab>
        <RibbonTab $kind="context">视频工具</RibbonTab>
        <RibbonEnd><ChevronDown /><Help>?</Help></RibbonEnd>
      </RibbonTabs>
      <AddressRow>
        <NavArrows>
          <Ico w={13} h={11} stroke={1.6}><path d="M13 5.500H1M6 .8L1.200 5.500 6 10.200" /></Ico>
          <Ico w={13} h={11} stroke={1.4}><path d="M0 5.500h12M7 .8l4.800 4.700L7 10.200" stroke="#cfcfcf" /></Ico>
          <ChevronDown w={7} />
          <Ico w={11} h={12} stroke={1.8}><path d="M5.500 12V1.500M.8 6l4.700-4.700L10.200 6" /></Ico>
        </NavArrows>
        <AddressBox>
          <FolderYellow />
          {crumbs.map(name => (
            <React.Fragment key={name}><Crumb /><CrumbLink href="#">{name}</CrumbLink></React.Fragment>
          ))}
          <AddressTools>
            <ChevronDown />
            <AddressSplit />
            <Ico w={12} h={12} stroke={1.6}><path d="M4 2.800A4.200 4.200 0 1 0 8.500 3M2.500.8v3.200H6" /></Ico>
          </AddressTools>
        </AddressBox>
        <FileSearch><FileSearchInput aria-label="搜索" placeholder={'搜索"素材"'} /><Magnifier /></FileSearch>
      </AddressRow>
      <ExplorerBody>
        <NavPane>
          {nav.map(n => (
            <NavItem key={n.text} href="#" $child={n.child} $selected={n.selected} $spaced={n.spaced}>
              {navGlyphs[n.icon]}{n.text}
            </NavItem>
          ))}
        </NavPane>
        <FileArea>
          <FileTable>
            <colgroup><col style={{ width: 257 }} /><col style={{ width: 144 }} /><col style={{ width: 120 }} /><col /></colgroup>
            <thead>
              <tr>
                <th><HeadName>名称<SortMark><Ico w={9} h={5} stroke={1}><path d="M.5 4.500l4-4 4 4" /></Ico></SortMark></HeadName></th>
                <th>修改日期</th><th>类型</th><th>大小</th>
              </tr>
            </thead>
          </FileTable>
          <FileRows>
            <colgroup><col style={{ width: 258 }} /><col style={{ width: 144 }} /><col style={{ width: 100 }} /><col /></colgroup>
            <tbody>
              {files.map(([name, date, kind, size]) => (
                <tr key={name}><td><FileName><PlayFile />{name}</FileName></td><td>{date}</td><td>{kind}</td><td>{size}</td></tr>
              ))}
            </tbody>
          </FileRows>
        </FileArea>
      </ExplorerBody>
      <ExplorerStatus>
        <span>4 个项目</span>
        <StatusSplit />
        <span>已选择 4 个项目</span>
        <span>417 MB</span>
        <StatusSplit />
        <ViewButtons>
          <ViewButton $on aria-label="详细信息"><Ico w={16} h={13}><path d="M.5.5h4v12h-4zM.5 4.500h4M.5 8.500h4" fill="#fff" stroke="#9a8fa0" /><path d="M2 2h1v1H2zM2 6h1v1H2zM2 10h1v1H2zM6 2h4v1H6zM6 6h4v1H6zM6 10h4v1H6zM12 2h4v1h-4zM12 6h4v1h-4zM12 10h4v1h-4z" fill="#5b6770" /></Ico></ViewButton>
          <ViewButton aria-label="大缩略图"><PictureGlyph w={14} h={11} /></ViewButton>
        </ViewButtons>
      </ExplorerStatus>
    </Explorer>
  );
}

export default function App() {
  return (
    <Page>
      <GlobalStyle />
      <TitleBar>
        <AppBadge>Pr</AppBadge>
        <AppTitle>Adobe Premiere Pro 2020 - D:\video PR剪辑文件\pr教学.prproj *</AppTitle>
        <WindowButtons $gap={35}>
          <Button aria-label="最小化"><Ico w={10} h={10}><path d="M0 5h10v1H0z" /></Ico></Button>
          <Button aria-label="还原"><Ico w={10} h={10} stroke={1}><path d="M.5 2.500h7v7h-7zM2.500 2.500v-2h7v7h-2" /></Ico></Button>
          <Button aria-label="关闭"><Ico w={10} h={10} stroke={1}><path d="M0 0l10 10M10 0L0 10" /></Ico></Button>
        </WindowButtons>
      </TitleBar>
      <MenuBar>
        {menus.map(([name, key]) => <Button key={key}>{name}(<u>{key}</u>)</Button>)}
      </MenuBar>
      <Workspace>
        <LeftSide>
          <UpperRow>
            <SourceMonitor />
            <ToolPanel />
            <Panel>
              <TabBar>
                <Tab $active><Caption text="节目: 序列 03" /><MenuLines /></Tab>
                <Tab>字幕:（无字幕）</Tab>
              </TabBar>
              <Screen />
              <ZoomRow><Ring /></ZoomRow>
            </Panel>
          </UpperRow>
          <LowerRow>
            <ProjectPanel />
            <Timeline />
            <AudioMeter />
          </LowerRow>
        </LeftSide>
        <EffectsPanel />
      </Workspace>
      <AppStatus>
        <Ico w={16} h={12} stroke={1.2}><path d="M5.500 11a4.500 4.500 0 1 1 1-8.800A5 5 0 1 1 10.500 11z" /><path d="M9 8.500L6.800 6.300A1.800 1.800 0 1 0 5.500 9M8 4a2.700 2.700 0 1 1 2.500 5" /></Ico>
        <StatusDivider />
      </AppStatus>
      <Taskbar><TaskbarField /></Taskbar>
      <FileExplorer />
      <DragGhost>
        <DragCount>4</DragCount>
        <DropHint><Ico w={10} h={10}><path d="M4 0h2v4h4v2H6v4H4V6H0V4h4z" /></Ico>复制</DropHint>
        <Pointer><Ico w={12} h={19}><path d="M.5.5v15.500l3.500-3.300 2.300 5.500 2.200-1-2.300-5.200h4.800z" fill="#fff" stroke="#000" strokeWidth=".8" /></Ico></Pointer>
      </DragGhost>
    </Page>
  );
}
